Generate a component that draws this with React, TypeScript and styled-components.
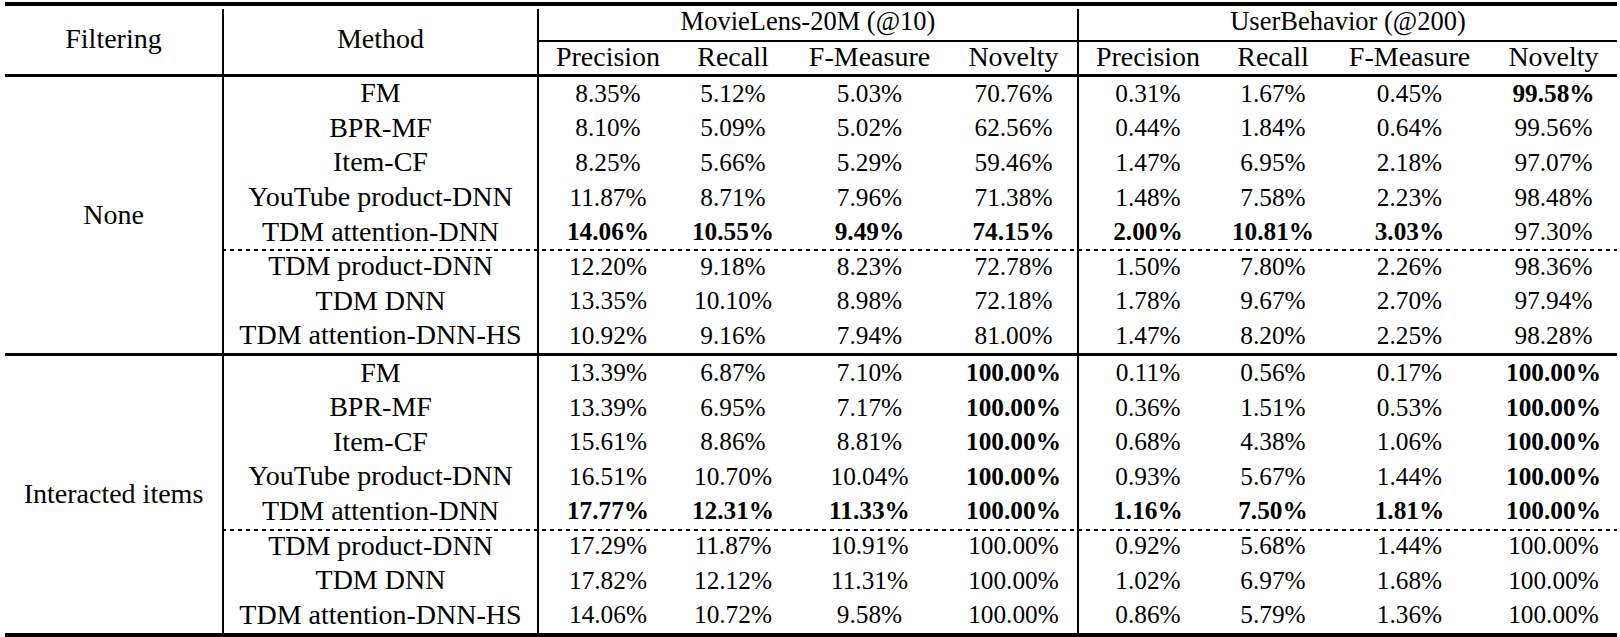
import React from 'react';
import styled, { createGlobalStyle } from 'styled-components';

const GlobalStyle = createGlobalStyle`
  html, body {
    margin: 0;
    padding: 0;
    background: #ffffff;
  }
  body {
    font-family: 'Liberation Serif', 'Times New Roman', serif;
    color: #000000;
  }
`;

const DATA_COLS = 'repeat(2, 140px 112px 161px 127px)';
const ROW_H = 34.6;
const LABEL_SIZE = 28;
const NUM_SIZE = 25.3;

const Page = styled.div`
  padding: 2px 0 0 5px;
  width: 1612px;
`;

const Rule = styled.div<{ $h: number }>`
  height: ${(p) => p.$h}px;
  background: #000000;
`;

const Header = styled.div`
  display: grid;
  grid-template-columns: 217px 315px ${DATA_COLS};
  grid-template-rows: 31px 1.5px 32.5px;
  margin-top: 3px;
  font-size: ${LABEL_SIZE}px;
`;

const HeadCell = styled.div<{ $line?: boolean }>`
  display: flex;
  align-items: center;
  justify-content: center;
  white-space: nowrap;
  box-sizing: border-box;
  border-left: ${(p) => (p.$line ? '2px solid #000' : 'none')};
`;

const StubHead = styled(HeadCell)`
  grid-row: 1 / span 3;
  padding-bottom: 5px;
`;

const GroupHead = styled(HeadCell)`
  grid-row: 1;
  grid-column: span 4;
  padding-bottom: 6px;
  font-size: 26.5px;
`;

const CmidRule = styled.div`
  grid-row: 2;
  grid-column: 3 / -1;
  background: #000000;
`;

const SubHead = styled(HeadCell)`
  grid-row: 3;
  padding-bottom: 2px;
`;

const Block = styled.div`
  display: grid;
  grid-template-columns: 217px 1fr;
`;

const FilterCell = styled.div`
  display: flex;
  align-items: center;
  justify-content: center;
  white-space: nowrap;
  font-size: ${LABEL_SIZE}px;
`;

const Rows = styled.div`
  display: flex;
  flex-direction: column;
`;

const Row = styled.div<{ $dashed?: boolean }>`
  display: grid;
  grid-template-columns: 315px ${DATA_COLS};
  height: ${ROW_H}px;
  background: ${(p) =>
    p.$dashed
      ? 'linear-gradient(to right, #000 50%, transparent 50%) 0 0 / 8px 2px repeat-x'
      : 'none'};
`;

const Cell = styled.div<{ $line?: boolean; $bold?: boolean }>`
  display: flex;
  align-items: center;
  justify-content: center;
  white-space: nowrap;
  box-sizing: border-box;
  padding-bottom: 1px;
  border-left: ${(p) => (p.$line ? '2px solid #000' : 'none')};
  font-size: ${NUM_SIZE}px;
  font-weight: ${(p) => (p.$bold ? 700 : 400)};
`;

const MethodCell = styled(Cell)`
  font-size: ${LABEL_SIZE}px;
`;

const metrics = ['Precision', 'Recall', 'F-Measure', 'Novelty'];

// a leading * marks a bold (best) value
const blocks = [
  {
    filter: 'None',
    rows: [
      ['FM', '8.35%', '5.12%', '5.03%', '70.76%', '0.31%', '1.67%', '0.45%', '*99.58%'],
      ['BPR-MF', '8.10%', '5.09%', '5.02%', '62.56%', '0.44%', '1.84%', '0.64%', '99.56%'],
      ['Item-CF', '8.25%', '5.66%', '5.29%', '59.46%', '1.47%', '6.95%', '2.18%', '97.07%'],
      ['YouTube product-DNN', '11.87%', '8.71%', '7.96%', '71.38%', '1.48%', '7.58%', '2.23%', '98.48%'],
      ['TDM attention-DNN', '*14.06%', '*10.55%', '*9.49%', '*74.15%', '*2.00%', '*10.81%', '*3.03%', '97.30%'],
      ['TDM product-DNN', '12.20%', '9.18%', '8.23%', '72.78%', '1.50%', '7.80%', '2.26%', '98.36%'],
      ['TDM DNN', '13.35%', '10.10%', '8.98%', '72.18%', '1.78%', '9.67%', '2.70%', '97.94%'],
      ['TDM attention-DNN-HS', '10.92%', '9.16%', '7.94%', '81.00%', '1.47%', '8.20%', '2.25%', '98.28%'],
    ],
  },
  {
    filter: 'Interacted items',
    rows: [
      ['FM', '13.39%', '6.87%', '7.10%', '*100.00%', '0.11%', '0.56%', '0.17%', '*100.00%'],
      ['BPR-MF', '13.39%', '6.95%', '7.17%', '*100.00%', '0.36%', '1.51%', '0.53%', '*100.00%'],
      ['Item-CF', '15.61%', '8.86%', '8.81%', '*100.00%', '0.68%', '4.38%', '1.06%', '*100.00%'],
      ['YouTube product-DNN', '16.51%', '10.70%', '10.04%', '*100.00%', '0.93%', '5.67%', '1.44%', '*100.00%'],
      ['TDM attention-DNN', '*17.77%', '*12.31%', '*11.33%', '*100.00%', '*1.16%', '*7.50%', '*1.81%', '*100.00%'],
      ['TDM product-DNN', '17.29%', '11.87%', '10.91%', '100.00%', '0.92%', '5.68%', '1.44%', '100.00%'],
      ['TDM DNN', '17.82%', '12.12%', '11.31%', '100.00%', '1.02%', '6.97%', '1.68%', '100.00%'],
      ['TDM attention-DNN-HS', '14.06%', '10.72%', '9.58%', '100.00%', '0.86%', '5.79%', '1.36%', '100.00%'],
    ],
  },
];

const App: React.FC = () => {
  return (
    <>
      <GlobalStyle />
      <Page>
        <Rule $h={4} />
        <Header>
          <StubHead style={{ gridColumn: 1 }}>Filtering</StubHead>
          <StubHead $line style={{ gridColumn: 2 }}>Method</StubHead>
          <GroupHead $line>MovieLens-20M (@10)</GroupHead>
          <GroupHead $line>UserBehavior (@200)</GroupHead>
          <CmidRule />
          {[...metrics, ...metrics].map((m, i) => (
            <SubHead key={i} $line={i % 4 === 0}>
              {m}
            </SubHead>
          ))}
        </Header>
        <Rule $h={2.5} />
        {blocks.map((block, b) => (
          <React.Fragment key={block.filter}>
            {b > 0 && <Rule $h={2.5} />}
            <Block>
              <FilterCell>{block.filter}</FilterCell>
              <Rows>
                {block.rows.map(([method, ...values], r) => (
                  <Row key={method} $dashed={r === 5}>
                    <MethodCell $line>{method}</MethodCell>
                    {values.map((v, i) => (
                      <Cell key={i} $line={i % 4 === 0} $bold={v.startsWith('*')}>
                        {v.replace('*', '')}
                      </Cell>
                    ))}
                  </Row>
                ))}
              </Rows>
            </Block>
          </React.Fragment>
        ))}
        <Rule $h={4} />
      </Page>
    </>
  );
};

export default App;
